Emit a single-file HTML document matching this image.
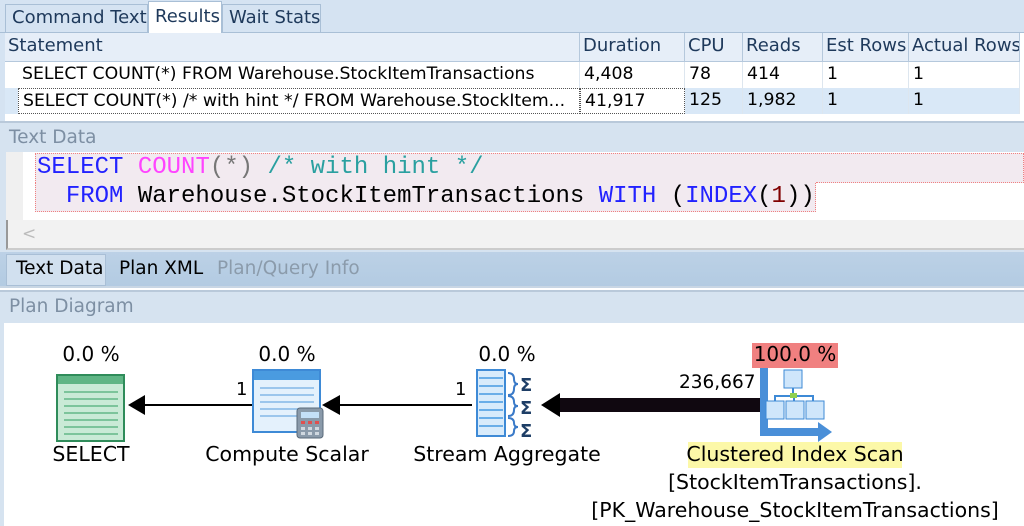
<!DOCTYPE html>
<html><head><style>
*{margin:0;padding:0;box-sizing:border-box}
body{width:1024px;height:526px;overflow:hidden;background:#fff;font-family:"DejaVu Sans","Liberation Sans",sans-serif;font-size:17px;color:#000;position:relative}
.a{position:absolute;white-space:nowrap}
.tab{position:absolute;white-space:nowrap;top:4px;height:28px;border:1px solid #a9bfd6;border-bottom:none;background:#d5e3f2;color:#1e395b;padding:2px 6px 0;font-size:18px}
.hd{position:absolute;white-space:nowrap;overflow:hidden;top:33px;height:29px;background:#e6eef8;border-right:1px solid #b5c8dc;border-bottom:1px solid #b5c8dc;color:#1e395b;padding:2px 3px 0;font-size:18px}
.cell{position:absolute;white-space:nowrap;height:26px;padding:2px 4px 0;border-right:1px solid #dde6ef;font-size:17.3px}
.code{font-family:"Liberation Mono",monospace;font-size:24px;color:#000;white-space:pre}
.kw{color:#2222ff}.fn{color:#ff44ff}.cm{color:#2aa0a0}.gr{color:#777}
.pct{position:absolute;white-space:nowrap;font-size:20px;transform:translateX(-50%);top:342px}
.lbl{position:absolute;white-space:nowrap;font-size:20.5px;transform:translateX(-50%)}
</style></head><body>
<div class="a" style="left:0;top:0;width:1024px;height:33px;background:#d5e3f2;border-bottom:1px solid #a9bfd6"></div>
<div class="tab" style="left:5px;width:143px">Command Text</div>
<div class="tab" style="left:148px;top:1px;height:32px;width:74px;background:#fff;padding-top:4px">Results</div>
<div class="tab" style="left:222px;width:99px">Wait Stats</div>
<div class="a" style="left:0;top:33px;width:1024px;height:90px;background:#fff;border-left:5px solid #d5e3f2"></div>
<div class="hd" style="left:5px;width:575px">Statement</div>
<div class="hd" style="left:580px;width:105px">Duration</div>
<div class="hd" style="left:685px;width:58px">CPU</div>
<div class="hd" style="left:743px;width:80px">Reads</div>
<div class="hd" style="left:823px;width:86px">Est Rows</div>
<div class="hd" style="left:909px;width:111px">Actual Rows</div>
<div class="a" style="left:5px;top:88px;width:1015px;height:26px;background:#d9e8f7"></div>
<div class="cell" style="left:18px;top:62px;width:562px">SELECT COUNT(*) FROM Warehouse.StockItemTransactions</div>
<div class="cell" style="left:580px;top:62px;width:105px">4,408</div>
<div class="cell" style="left:685px;top:62px;width:58px">78</div>
<div class="cell" style="left:743px;top:62px;width:80px">414</div>
<div class="cell" style="left:823px;top:62px;width:86px">1</div>
<div class="cell" style="left:909px;top:62px;width:111px">1</div>
<div class="cell" style="left:18px;top:88px;width:562px;border:1px dotted #555;background:#fff;overflow:hidden">SELECT COUNT(*) /* with hint */ FROM Warehouse.StockItem...</div>
<div class="cell" style="left:580px;top:88px;width:105px;border:1px dotted #555;background:#fff">41,917</div>
<div class="cell" style="left:685px;top:88px;width:58px">125</div>
<div class="cell" style="left:743px;top:88px;width:80px">1,982</div>
<div class="cell" style="left:823px;top:88px;width:86px">1</div>
<div class="cell" style="left:909px;top:88px;width:111px">1</div>
<div class="a" style="left:0;top:121px;width:1024px;height:131px;background:#d6e3f0;border-top:2px solid #b9c9da"></div>
<div class="a" style="left:9px;top:127px;color:#7d8fa3;font-size:18.5px">Text Data</div>
<div class="a" style="left:6px;top:152px;width:1018px;height:68px;background:#fff"></div>
<div class="a" style="left:6px;top:152px;width:17px;height:68px;background:#f0f0f0"></div>
<div class="a" style="left:35px;top:153px;width:989px;height:30px;background:#f2eaf0;border:1px dotted #f08080;border-bottom:none"></div>
<div class="a" style="left:35px;top:183px;width:781px;height:29px;background:#f2eaf0;border:1px dotted #f08080;border-top:none"></div>
<div class="a" style="left:816px;top:182px;width:208px;height:1px;border-top:1px dotted #f08080"></div>
<div class="a code" style="left:37px;top:154px"><span class="kw">SELECT</span> <span class="fn">COUNT</span><span class="gr">(*)</span> <span class="cm">/* with hint */</span></div>
<div class="a code" style="left:37px;top:183px">  <span class="kw">FROM</span> Warehouse.StockItemTransactions <span class="kw">WITH</span> (<span class="kw">INDEX</span>(<span style="color:#800000">1</span>))</div>
<div class="a" style="left:6px;top:220px;width:1018px;height:30px;background:#f2f2f2;border-left:2px solid #999;border-bottom:2px solid #ccc"></div>
<div class="a" style="left:22px;top:224px;color:#bbb;font-size:17px">&lt;</div>
<div class="a" style="left:0;top:252px;width:1024px;height:36px;background:linear-gradient(#bcd1e6,#b3cbe2);border-bottom:2px solid #c8d6e4"></div>
<div class="a" style="left:6px;top:254px;width:100px;height:32px;background:#d1e0ef;border:1px solid #a9bfd6"></div>
<div class="a" style="left:16px;top:258px;font-size:18.5px">Text Data</div>
<div class="a" style="left:119px;top:258px;font-size:18.5px">Plan XML</div>
<div class="a" style="left:217px;top:258px;color:#8b9bab;font-size:18.5px">Plan/Query Info</div>
<div class="a" style="left:0;top:290px;width:1024px;height:33px;background:#d6e3f0;border-top:2px solid #b9c9da"></div>
<div class="a" style="left:9px;top:296px;color:#7d8fa3;font-size:18.5px">Plan Diagram</div>
<div class="a" style="left:0;top:323px;width:1024px;height:203px;background:#fff;border-left:4px solid #d6e3f0"></div>

<svg class="a" style="left:0;top:0" width="1024" height="526">
 <line x1="145" y1="405" x2="252" y2="405" stroke="#000" stroke-width="2"/>
 <polygon points="128,405 145,395 145,415" fill="#000"/>
 <line x1="340" y1="405" x2="472" y2="405" stroke="#000" stroke-width="2"/>
 <polygon points="322,405 340,395 340,415" fill="#000"/>
 <rect x="558" y="398" width="202" height="14" fill="#100810"/>
 <polygon points="541,405 560,393 560,417" fill="#000"/>
 <rect x="57" y="375" width="67" height="66" fill="#c9ead6" stroke="#2f8c5a" stroke-width="2"/>
 <rect x="58" y="376" width="65" height="8" fill="#5fb585"/>
 <g stroke="#7cc49b" stroke-width="2">
  <line x1="64" y1="392" x2="118" y2="392"/><line x1="64" y1="399" x2="118" y2="399"/><line x1="64" y1="406" x2="118" y2="406"/><line x1="64" y1="413" x2="118" y2="413"/><line x1="64" y1="420" x2="118" y2="420"/><line x1="64" y1="427" x2="118" y2="427"/><line x1="64" y1="434" x2="118" y2="434"/>
 </g>
 <rect x="253" y="370" width="67" height="62" fill="#e4f1fc" stroke="#3e8ad6" stroke-width="2"/>
 <rect x="254" y="371" width="65" height="9" fill="#4a9be0"/>
 <g stroke="#9cc6ec" stroke-width="2">
  <line x1="260" y1="388" x2="314" y2="388"/><line x1="260" y1="395" x2="314" y2="395"/><line x1="260" y1="402" x2="314" y2="402"/><line x1="260" y1="409" x2="314" y2="409"/><line x1="260" y1="416" x2="314" y2="416"/>
 </g>
 <rect x="297" y="408" width="26" height="30" rx="3" fill="#8a9aaa" stroke="#5a6a7a"/>
 <rect x="301" y="412" width="18" height="6" fill="#c4e0f8"/>
 <g fill="#e05050"><rect x="301" y="421" width="4" height="3"/><rect x="308" y="421" width="4" height="3"/><rect x="315" y="421" width="4" height="3"/></g>
 <g fill="#d0d8e0"><rect x="301" y="427" width="4" height="3"/><rect x="308" y="427" width="4" height="3"/><rect x="315" y="427" width="4" height="3"/><rect x="301" y="432" width="4" height="3"/><rect x="308" y="432" width="4" height="3"/><rect x="315" y="432" width="4" height="3"/></g>
 <rect x="477" y="370" width="28" height="66" fill="#d8ebfb" stroke="#3e8ad6" stroke-width="2"/>
 <g stroke="#6aaee8" stroke-width="2"><line x1="479" y1="378" x2="503" y2="378"/><line x1="479" y1="386" x2="503" y2="386"/><line x1="479" y1="394" x2="503" y2="394"/><line x1="479" y1="402" x2="503" y2="402"/><line x1="479" y1="410" x2="503" y2="410"/><line x1="479" y1="418" x2="503" y2="418"/><line x1="479" y1="426" x2="503" y2="426"/></g>
 <g fill="none" stroke="#3a7ac8" stroke-width="2"><path d="M508 373 q6 0 6 6 q0 5 4 5 q-4 0 -4 5 q0 6 -6 6"/><path d="M508 396 q6 0 6 6 q0 4 4 4 q-4 0 -4 4 q0 6 -6 6"/><path d="M508 418 q6 0 6 5 q0 4 4 4 q-4 0 -4 4 q0 5 -6 5"/></g>
 <g font-family="DejaVu Sans,sans-serif" font-size="18" font-weight="bold" fill="#1e3e66"><text x="520" y="391">Σ</text><text x="520" y="414">Σ</text><text x="520" y="437">Σ</text></g>
 <rect x="760" y="368" width="8" height="68" fill="#4a8fd8"/>
 <rect x="760" y="428" width="60" height="8" fill="#4a8fd8"/>
 <polygon points="818,422 832,432 818,442" fill="#4a8fd8"/>
 <rect x="784" y="370" width="18" height="18" fill="#cfe6fb" stroke="#3e8ad6"/>
 <path d="M793 388 v8 M775 401 v-5 h38 v5 M794 396 v5" stroke="#3e8ad6" stroke-width="2" fill="none"/>
 <rect x="790" y="393" width="7" height="5" fill="#8fd050"/>
 <rect x="766" y="401" width="18" height="18" fill="#cfe6fb" stroke="#3e8ad6"/>
 <rect x="786" y="401" width="18" height="18" fill="#cfe6fb" stroke="#3e8ad6"/>
 <rect x="806" y="401" width="18" height="18" fill="#cfe6fb" stroke="#3e8ad6"/>
</svg>

<div class="a" style="left:752px;top:343px;width:86px;height:25px;background:#f08080"></div>
<div class="pct" style="left:91px">0.0 %</div>
<div class="pct" style="left:287px">0.0 %</div>
<div class="pct" style="left:507px">0.0 %</div>
<div class="pct" style="left:795px">100.0 %</div>
<div class="a" style="left:236px;top:379px;font-size:18px">1</div>
<div class="a" style="left:455px;top:379px;font-size:18px">1</div>
<div class="a" style="left:679px;top:372px;font-size:18.5px">236,667</div>
<div class="a" style="left:688px;top:442px;width:214px;height:26px;background:#fcf8a8"></div>
<div class="lbl" style="left:91px;top:442px">SELECT</div>
<div class="lbl" style="left:287px;top:442px">Compute Scalar</div>
<div class="lbl" style="left:507px;top:442px">Stream Aggregate</div>
<div class="lbl" style="left:795px;top:442px">Clustered Index Scan</div>
<div class="lbl" style="left:795px;top:470px">[StockItemTransactions].</div>
<div class="lbl" style="left:795px;top:498px">[PK_Warehouse_StockItemTransactions]</div>
</body></html>
